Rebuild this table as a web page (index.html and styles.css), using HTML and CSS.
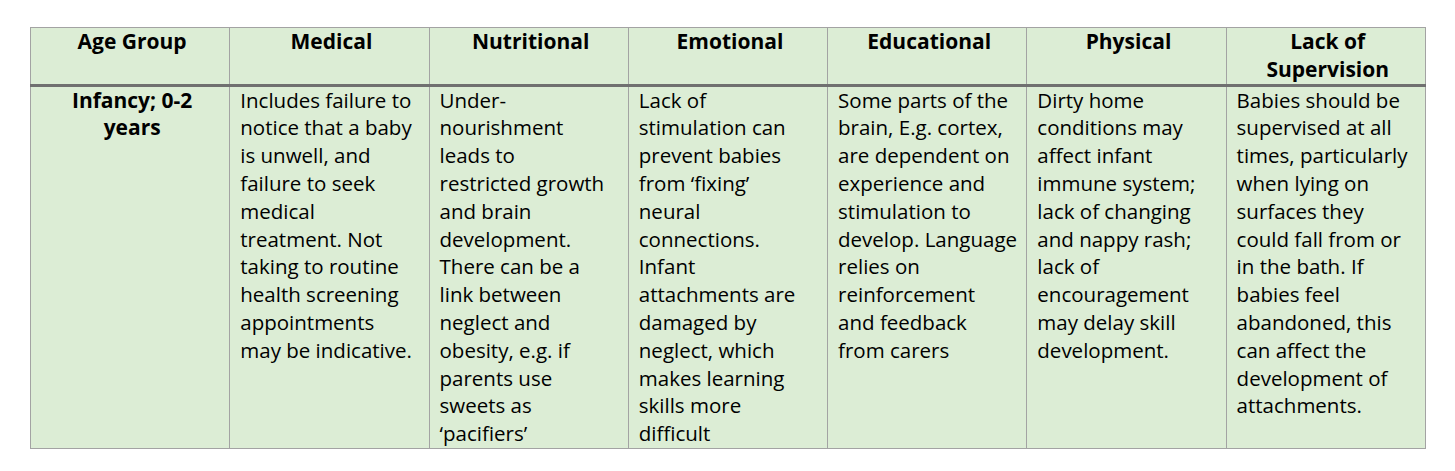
FILE: index.html
```html
<!DOCTYPE html>
<html lang="en">
<head>
<meta charset="utf-8">
<title>Neglect by age group</title>
<link rel="stylesheet" href="styles.css">
</head>
<body>
<table class="grid">
  <colgroup>
    <col class="c"><col class="c"><col class="c"><col class="c"><col class="c"><col class="c"><col class="c">
  </colgroup>
  <thead>
    <tr class="head">
      <th>Age Group</th>
      <th>Medical</th>
      <th>Nutritional</th>
      <th>Emotional</th>
      <th>Educational</th>
      <th>Physical</th>
      <th>Lack of<br>Supervision</th>
    </tr>
  </thead>
  <tbody>
    <tr class="body">
      <th class="age">Infancy; 0-2<br>years</th>
      <td>Includes failure to<br>notice that a baby<br>is unwell, and<br>failure to seek<br>medical<br>treatment. Not<br>taking to routine<br>health screening<br>appointments<br>may be indicative.</td>
      <td>Under-<br>nourishment<br>leads to<br>restricted growth<br>and brain<br>development.<br>There can be a<br>link between<br>neglect and<br>obesity, e.g. if<br>parents use<br>sweets as<br>‘pacifiers’</td>
      <td>Lack of<br>stimulation can<br>prevent babies<br>from ‘fixing’<br>neural<br>connections.<br>Infant<br>attachments are<br>damaged by<br>neglect, which<br>makes learning<br>skills more<br>difficult</td>
      <td>Some parts of the<br>brain, E.g. cortex,<br>are dependent on<br>experience and<br>stimulation to<br>develop. Language<br>relies on<br>reinforcement<br>and feedback<br>from carers</td>
      <td>Dirty home<br>conditions may<br>affect infant<br>immune system;<br>lack of changing<br>and nappy rash;<br>lack of<br>encouragement<br>may delay skill<br>development.</td>
      <td>Babies should be<br>supervised at all<br>times, particularly<br>when lying on<br>surfaces they<br>could fall from or<br>in the bath. If<br>babies feel<br>abandoned, this<br>can affect the<br>development of<br>attachments.</td>
    </tr>
  </tbody>
</table>
</body>
</html>
```
FILE: styles.css
```css
html, body {
  margin: 0;
  padding: 0;
  background: #ffffff;
}
body {
  padding: 27px 0 0 30px;
  font-family: "Open Sans", "Lato", sans-serif;
  color: #000;
}
.grid {
  border-collapse: collapse;
  table-layout: fixed;
  width: 1395px;
  background: #dcedd5;
  font-size: 20.5px;
  line-height: 27.8px;
}
.grid .c {
  width: 199.28px;
}
.grid th,
.grid td {
  border: 1px solid #a3a3a3;
  padding: 0 6px 0 10px;
  vertical-align: top;
  white-space: nowrap;
  overflow: hidden;
}
.grid th {
  font-weight: 700;
  font-size: 21px;
  text-align: center;
}
.grid td {
  font-weight: 400;
  text-align: left;
}
.head th {
  height: 55.6px;
  border-bottom: 3px solid #707070;
}
.body td,
.body th {
  height: 361px;
}
```
